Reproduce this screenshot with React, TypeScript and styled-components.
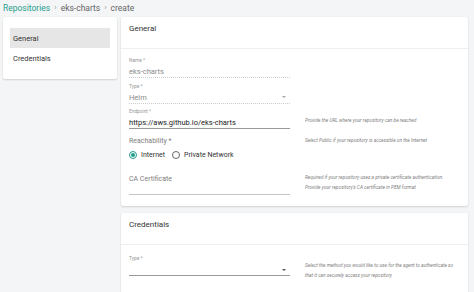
import React from "react";
import styled, { createGlobalStyle } from "styled-components";

const Global = createGlobalStyle`
  html, body { margin: 0; padding: 0; background: #f4f5f7; }
  body { font-family: Roboto, "Liberation Sans", Arial, sans-serif; color: #333; width: 474px; height: 292px; overflow: hidden; }
`;

const Page = styled.div`
  display: flex;
  flex-direction: column;
  padding: 0 6px 0 3px;
`;

const Crumbs = styled.div`
  height: 17px;
  display: flex;
  align-items: center;
  gap: 4px;
  font-size: 8.5px;
  color: #666;
  line-height: 10px;
  padding-bottom: 1px;
  box-sizing: border-box;
`;

const CrumbLink = styled.span`
  color: #1f9d8c;
`;

const Sep = styled.span`
  color: #999;
  font-size: 8px;
`;

const Main = styled.div`
  display: flex;
  gap: 4px;
  align-items: flex-start;
`;

const Card = styled.div`
  background: #fff;
  border-radius: 2px;
  box-shadow: 0 1px 2px rgba(0, 0, 0, 0.14), 0 0 1px rgba(0, 0, 0, 0.08);
`;

const Sidebar = styled(Card)`
  width: 114px;
  height: 62px;
  box-sizing: border-box;
  padding: 11px 7px;
  display: flex;
  flex-direction: column;
`;

const NavItem = styled.div<{ $active?: boolean }>`
  height: 20px;
  display: flex;
  align-items: center;
  padding-left: 3px;
  font-size: 7.5px;
  color: #333;
  background: ${(p) => (p.$active ? "#e6e6e6" : "transparent")};
`;

const Column = styled.div`
  flex: 1;
  display: flex;
  flex-direction: column;
  gap: 7px;
`;

const CardHeader = styled.div`
  height: 32px;
  box-sizing: border-box;
  padding: 7px 8px 0;
  line-height: 10px;
  font-size: 8px;
  color: #333;
  border-bottom: 1px solid #eeeff1;
`;

const CardBody = styled.div<{ $top: number; $bottom: number }>`
  padding: ${(p) => p.$top}px 8px ${(p) => p.$bottom}px;
  display: flex;
  flex-direction: column;
`;

const Row = styled.div<{ $mb?: number }>`
  display: flex;
  gap: 15px;
  margin-bottom: ${(p) => p.$mb ?? 0}px;
`;

const Field = styled.div`
  width: 161px;
  flex: none;
  display: flex;
  flex-direction: column;
`;

const Label = styled.div`
  font-size: 4.8px;
  line-height: 8px;
  color: #999;
`;

const Input = styled.div<{ $muted?: boolean; $line?: string }>`
  height: 11px;
  padding-top: 1px;
  display: flex;
  align-items: center;
  justify-content: space-between;
  font-size: 7.5px;
  color: ${(p) => (p.$muted ? "#8a8a8a" : "#222")};
  border-bottom: 1px ${(p) => (p.$muted ? "dotted" : "solid")} ${(p) => p.$line ?? "#b5b5b5"};
`;

const Caret = styled.span<{ $dark?: boolean }>`
  width: 0;
  height: 0;
  margin-right: 4px;
  border-left: 2.5px solid transparent;
  border-right: 2.5px solid transparent;
  border-top: 2.5px solid ${(p) => (p.$dark ? "#555" : "#aaa")};
`;

const Help = styled.div<{ $pt?: number; $pb?: number; $end?: boolean }>`
  align-self: ${(p) => (p.$end ? "flex-end" : "flex-start")};
  padding-top: ${(p) => p.$pt ?? 0}px;
  padding-bottom: ${(p) => p.$pb ?? 0}px;
  font-size: 4.8px;
  line-height: 10px;
  font-style: italic;
  color: #808080;
  white-space: nowrap;
`;

const BigLabel = styled.div`
  font-size: 7px;
  line-height: 10px;
  height: 12px;
  color: #808080;
`;

const RadioRow = styled.div`
  display: flex;
  align-items: center;
  height: 14px;
  gap: 7px;
`;

const RadioOpt = styled.label`
  display: flex;
  align-items: center;
  gap: 4px;
  font-size: 7px;
  color: #333;
`;

const RadioDot = styled.span<{ $on?: boolean }>`
  width: 8px;
  height: 8px;
  box-sizing: border-box;
  border-radius: 50%;
  border: 1px solid ${(p) => (p.$on ? "#1f9d8c" : "#666")};
  display: flex;
  align-items: center;
  justify-content: center;
  &::after {
    content: "";
    width: 4px;
    height: 4px;
    border-radius: 50%;
    background: ${(p) => (p.$on ? "#1f9d8c" : "transparent")};
  }
`;

const TextArea = styled.div`
  height: 23px;
  box-sizing: border-box;
  padding-top: 2px;
  font-size: 7px;
  line-height: 10px;
  color: #808080;
  border-bottom: 1px solid #c4c4c4;
`;

export default function App() {
  return (
    <>
      <Global />
      <Page>
        <Crumbs>
          <CrumbLink>Repositories</CrumbLink>
          <Sep>›</Sep>
          <span>eks-charts</span>
          <Sep>›</Sep>
          <span>create</span>
        </Crumbs>
        <Main>
          <Sidebar>
            <NavItem $active>General</NavItem>
            <NavItem>Credentials</NavItem>
          </Sidebar>
          <Column>
            <Card>
              <CardHeader>General</CardHeader>
              <CardBody $top={8} $bottom={11}>
                <Row $mb={4.5}>
                  <Field>
                    <Label>Name *</Label>
                    <Input $muted $line="#ccc">eks-charts</Input>
                  </Field>
                </Row>
                <Row $mb={4.5}>
                  <Field>
                    <Label>Type *</Label>
                    <Input $muted $line="#ccc">
                      Helm
                      <Caret />
                    </Input>
                  </Field>
                </Row>
                <Row $mb={7}>
                  <Field>
                    <Label>Endpoint *</Label>
                    <Input $line="#999">https://aws.github.io/eks-charts</Input>
                  </Field>
                  <Help $end $pb={3}>
                    Provide the URL where your repository can be reached
                  </Help>
                </Row>
                <Row $mb={10}>
                  <Field>
                    <BigLabel>Reachability *</BigLabel>
                    <RadioRow>
                      <RadioOpt>
                        <RadioDot $on />
                        Internet
                      </RadioOpt>
                      <RadioOpt>
                        <RadioDot />
                        Private Network
                      </RadioOpt>
                    </RadioRow>
                  </Field>
                  <Help $pt={0}>
                    Select Public if your repository is accessible on the Internet
                  </Help>
                </Row>
                <Row>
                  <Field>
                    <TextArea>CA Certificate</TextArea>
                  </Field>
                  <Help $pt={1}>
                    Required if your repository uses a private certificate authentication.
                    <br />
                    Provide your repository's CA certificate in PEM format
                  </Help>
                </Row>
              </CardBody>
            </Card>
            <Card>
              <CardHeader>Credentials</CardHeader>
              <CardBody $top={10} $bottom={12}>
                <Row>
                  <Field>
                    <Label>Type *</Label>
                    <Input $line="#999">
                      <span />
                      <Caret $dark />
                    </Input>
                  </Field>
                  <Help $pt={6}>
                    Select the method you would like to use for the agent to authenticate so
                    <br />
                    that it can securely access your repository
                  </Help>
                </Row>
              </CardBody>
            </Card>
          </Column>
        </Main>
      </Page>
    </>
  );
}
